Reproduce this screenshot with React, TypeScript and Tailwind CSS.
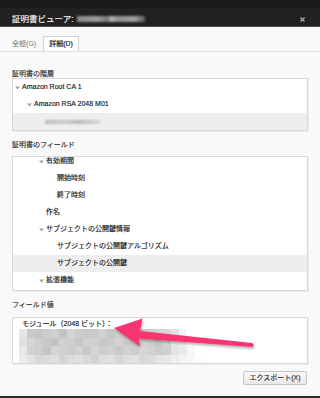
import React from "react";

const Tri = () => (
  <svg width="5" height="4" viewBox="0 0 5 4" className="shrink-0">
    <polygon points="0,0.5 5,0.5 2.5,3.5" fill="#a3a3a3" />
  </svg>
);

const grid = [
  ["e6", "c9", "c6", "cc", "d0", "c4", "d4", "cd", "c8", "ca", "d2", "c7", "cb", "c9", "d0", "c8", "cc", "d4", "d8", "e2", "f4", "ff", "ff", "ff"],
  ["e0", "d6", "cd", "c9", "c4", "d0", "ce", "c7", "d2", "cf", "c8", "cb", "d4", "c9", "c6", "d0", "cf", "c6", "d2", "e6", "f0", "ff", "ff", "ff"],
  ["e8", "d2", "ce", "c4", "d6", "d0", "cb", "d2", "c8", "d4", "ce", "d0", "c9", "d1", "cc", "d6", "d2", "cc", "d0", "e4", "ea", "f6", "ff", "ff"],
  ["ec", "e4", "d8", "dc", "e0", "d4", "dc", "e0", "d8", "d2", "de", "e0", "d6", "de", "e2", "d8", "dc", "e4", "e8", "ee", "f4", "f8", "fc", "ff"],
];
const rowH = [9, 8, 9, 8];

type Row = { label: string; pl: string; tri?: boolean; sel?: boolean };
const fields: Row[] = [
  { label: "有効期間", pl: "pl-[26px]", tri: true },
  { label: "開始時刻", pl: "pl-[44px]" },
  { label: "終了時刻", pl: "pl-[44px]" },
  { label: "作名", pl: "pl-[33px]" },
  { label: "サブジェクトの公開鍵情報", pl: "pl-[26px]", tri: true },
  { label: "サブジェクトの公開鍵アルゴリズム", pl: "pl-[44px]" },
  { label: "サブジェクトの公開鍵", pl: "pl-[44px]", sel: true },
  { label: "拡張機能", pl: "pl-[26px]", tri: true },
];

export default function App() {
  return (
    <div className="relative w-[320px] h-[398px] overflow-hidden flex flex-col bg-[#f9f9f9] text-[#161616] [-webkit-text-stroke:0.15px_#161616] font-['Liberation_Sans','Noto_Sans_CJK_JP',sans-serif] text-[7px]">
      {/* title bar */}
      <div className="h-[27px] shrink-0 bg-[#212121] border-b border-[#4a4a4a] flex flex-col">
        <div className="h-[8px] bg-[#1a1a1a]" />
        <div className="flex-1 flex items-center justify-between pl-[12px] pr-[15px] pt-[4px]">
          <div className="flex items-center text-[8.5px] leading-[12px] text-[#f2f2f2] [-webkit-text-stroke:0.2px_#f2f2f2]">
            <span>証明書ビューア: </span>
            <span className="ml-[3px] inline-block w-[68px] h-[6px] blur-[1px] bg-[linear-gradient(90deg,#8a8a8a,#9c9c9c_30%,#777_45%,#b5b5b5_50%,#8f8f8f_60%,#a0a0a0_85%,#5a5a5a)]" />
          </div>
          <svg width="5" height="5" viewBox="0 0 5 5">
            <path d="M0.5 0.5 L4.5 4.5 M4.5 0.5 L0.5 4.5" stroke="#b5b5b5" strokeWidth="1.1" />
          </svg>
        </div>
      </div>

      {/* tabs */}
      <div className="h-[25px] shrink-0 flex items-end pl-[12px] border-b border-[#dedede]">
        <span className="w-[31px] h-[15px] leading-[15px] text-[#777] [-webkit-text-stroke:0px]">全般(G)</span>
        <span className="w-[36px] h-[15px] leading-[14px] text-center bg-white border border-b-0 border-[#d2d2d2] text-[#111]">
          詳細(D)
        </span>
      </div>

      <div className="flex-1 flex flex-col px-[12px]">
        {/* hierarchy */}
        <div className="h-[26px] pt-[18px] leading-[8px] text-[#333]">証明書の階層</div>
        <div className="border border-[#d8d8d8] bg-white shadow-[1px_1px_0_#ececec]">
          <div className="h-[17px] flex items-center gap-[2px] pl-[2px]">
            <Tri />
            <span>Amazon Root CA 1</span>
          </div>
          <div className="h-[17px] flex items-center gap-[2px] pl-[14px]">
            <Tri />
            <span>Amazon RSA 2048 M01</span>
          </div>
          <div className="h-[17px] flex items-center pl-[32px] bg-[#eeeeee]">
            <span className="inline-block w-[55px] h-[4px] blur-[1px] bg-[linear-gradient(90deg,#bdbdbd,#c9c9c9_40%,#b8b8b8_60%,#d4d4d4)]" />
          </div>
        </div>

        {/* fields */}
        <div className="h-[25px] pt-[10px] leading-[8px] text-[#333]">証明書のフィールド</div>
        <div className="h-[135px] border border-[#d8d8d8] bg-white overflow-hidden shadow-[1px_1px_0_#ececec]">
          <div className="-mt-[4px]">
            {fields.map((r) => (
              <div
                key={r.label}
                className={`h-[17px] flex items-center gap-[2px] ${r.pl} ${r.sel ? "bg-[#eeeeee]" : ""}`}
              >
                {r.tri && <Tri />}
                <span>{r.label}</span>
              </div>
            ))}
          </div>
        </div>

        {/* field value */}
        <div className="h-[26px] pt-[10px] leading-[8px] text-[#333]">フィールド値</div>
        <div className="h-[47px] border border-[#d8d8d8] bg-white shadow-[1px_1px_0_#ececec]">
          <div className="h-[11px] leading-[11px] pl-[9px]">モジュール（2048 ビット）：</div>
          <div className="pl-[6px] flex flex-col">
            {grid.map((row, i) => (
              <div key={i} className="flex" style={{ height: rowH[i] }}>
                {row.map((c, j) => (
                  <div key={j} className="w-[8px] h-full" style={{ backgroundColor: `#${c}${c}${c}` }} />
                ))}
              </div>
            ))}
          </div>
        </div>

        <div className="flex justify-end pt-[7px] pr-[1px]">
          <div className="w-[64px] h-[14px] leading-[12px] text-center border border-[#c4c4c4] rounded-[2px] bg-[linear-gradient(#f7f7f7,#e9e9e9)] text-[#333]">
            エクスポート(X)
          </div>
        </div>
      </div>

      <div className="h-[2px] shrink-0 bg-[#2a2a2a]" />

      {/* annotation arrow */}
      <svg className="absolute inset-0 pointer-events-none" width="320" height="398" viewBox="0 0 320 398">
        <defs>
          <filter id="sh" x="-20%" y="-50%" width="140%" height="200%">
            <feDropShadow dx="1" dy="2" stdDeviation="1.2" floodColor="#000" floodOpacity="0.3" />
          </filter>
        </defs>
        <path
          d="M114 328 L142.5 318.5 L140 331 L252 343 Q255.5 345 252 347 L139 338.5 L139.5 346 Z"
          fill="#f7346f"
          filter="url(#sh)"
        />
      </svg>
    </div>
  );
}
